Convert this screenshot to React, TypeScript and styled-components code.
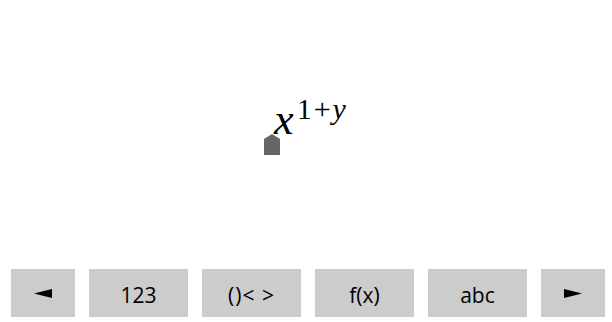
import styled, { createGlobalStyle } from 'styled-components';

const GlobalStyle = createGlobalStyle`
  html, body {
    margin: 0;
    padding: 0;
    background: #ffffff;
  }
  body {
    font-family: "Open Sans", "Noto Sans", sans-serif;
  }
`;

const Page = styled.div`
  width: 612px;
  height: 322px;
  display: flex;
  flex-direction: column;
  overflow: hidden;
`;

const Editor = styled.div`
  flex: 1;
  display: flex;
  justify-content: center;
  align-items: flex-start;
  padding-top: 92px;
  padding-left: 8px;
`;

const Formula = styled.div`
  position: relative;
  display: flex;
  align-items: flex-start;
  font-family: "Liberation Serif", "DejaVu Serif", serif;
  color: #000000;
`;

const Base = styled.span`
  font-style: italic;
  font-size: 44px;
  line-height: 48px;
  margin-top: 4px;
`;

const Sup = styled.span`
  font-size: 30px;
  line-height: 32px;
  margin-left: 3px;
  margin-top: 1px;
`;

const Op = styled.span`
  margin: 0 2px;
`;

const Italic = styled.span`
  font-style: italic;
`;

const Caret = styled.svg`
  position: absolute;
  left: -10px;
  top: 42px;
`;

const Keyboard = styled.div`
  display: flex;
  gap: 14px;
  padding: 0 7px 5px 11px;
`;

const Key = styled.button<{ $wide?: boolean }>`
  width: ${(p) => (p.$wide ? '99px' : '64px')};
  height: 48px;
  border: none;
  margin: 0;
  padding: 3px 0 0;
  background: #cccccc;
  color: #000000;
  font-family: "Open Sans", "Noto Sans", sans-serif;
  font-size: 21px;
  display: flex;
  align-items: center;
  justify-content: center;
  cursor: pointer;
`;

const Spaced = styled.span`
  letter-spacing: 1px;
`;

const ArrowIcon = ({ dir }: { dir: 'left' | 'right' }) => (
  <svg width="18" height="9" viewBox="0 0 18 9" style={{ marginTop: -3 }}>
    {dir === 'left' ? (
      <polygon points="0,4.5 18,0 18,9" fill="#000000" />
    ) : (
      <polygon points="0,0 18,4.5 0,9" fill="#000000" />
    )}
  </svg>
);

export default function App() {
  return (
    <>
      <GlobalStyle />
      <Page>
        <Editor>
          <Formula>
            <Base>x</Base>
            <Sup>
              1<Op>+</Op>
              <Italic>y</Italic>
            </Sup>
            <Caret width="16" height="21" viewBox="0 0 16 21">
              <polygon points="8,0 16,5 16,21 0,21 0,5" fill="#666666" />
            </Caret>
          </Formula>
        </Editor>
        <Keyboard>
          <Key>
            <ArrowIcon dir="left" />
          </Key>
          <Key $wide>123</Key>
          <Key $wide>
            <Spaced>()&lt; &gt;</Spaced>
          </Key>
          <Key $wide>f(x)</Key>
          <Key $wide>abc</Key>
          <Key>
            <ArrowIcon dir="right" />
          </Key>
        </Keyboard>
      </Page>
    </>
  );
}
